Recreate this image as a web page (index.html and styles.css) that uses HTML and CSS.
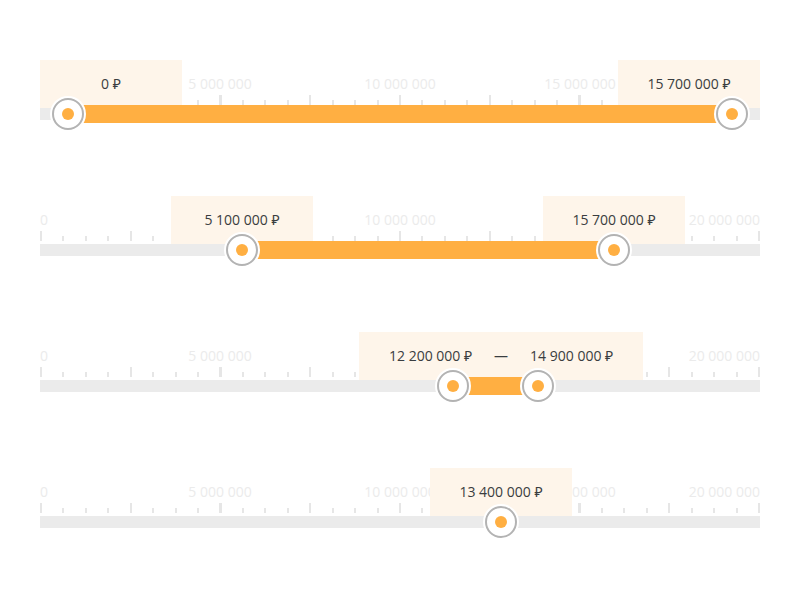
FILE: index.html
```html
<!DOCTYPE html>
<html lang="ru">
<head>
  <meta charset="UTF-8">
  <title>Price range sliders</title>
  <link rel="stylesheet" href="styles.css">
</head>
<body>
  <div class="page">

    <div class="slider">
      <div class="scale">
        <span>0</span><span>5 000 000</span><span>10 000 000</span><span>15 000 000</span><span>20 000 000</span>
      </div>
      <div class="ticks"></div>
      <div class="track">
        <div class="bubble" style="left: 0">0 ₽</div>
        <div class="bubble" style="left: 578px">15 700 000 ₽</div>
        <div class="fill" style="left: 27.5px; width: 664.5px"></div>
        <div class="handle" style="left: 27.5px"></div>
        <div class="handle" style="left: 692px"></div>
      </div>
    </div>

    <div class="slider">
      <div class="scale">
        <span>0</span><span>5 000 000</span><span>10 000 000</span><span>15 000 000</span><span>20 000 000</span>
      </div>
      <div class="ticks"></div>
      <div class="track">
        <div class="bubble" style="left: 131px">5 100 000 ₽</div>
        <div class="bubble" style="left: 503px">15 700 000 ₽</div>
        <div class="fill" style="left: 201.5px; width: 372.5px"></div>
        <div class="handle" style="left: 201.5px"></div>
        <div class="handle" style="left: 574px"></div>
      </div>
    </div>

    <div class="slider">
      <div class="scale">
        <span>0</span><span>5 000 000</span><span>10 000 000</span><span>15 000 000</span><span>20 000 000</span>
      </div>
      <div class="ticks"></div>
      <div class="track">
        <div class="bubble bubble-range" style="left: 319px">
          <span>12 200 000 ₽</span><span class="dash">—</span><span>14 900 000 ₽</span>
        </div>
        <div class="fill" style="left: 413px; width: 85px"></div>
        <div class="handle" style="left: 413px"></div>
        <div class="handle" style="left: 498px"></div>
      </div>
    </div>

    <div class="slider">
      <div class="scale">
        <span>0</span><span>5 000 000</span><span>10 000 000</span><span>15 000 000</span><span>20 000 000</span>
      </div>
      <div class="ticks"></div>
      <div class="track">
        <div class="bubble" style="left: 390px">13 400 000 ₽</div>
        <div class="handle" style="left: 461px"></div>
      </div>
    </div>

  </div>
</body>
</html>
```
FILE: styles.css
```css
html, body {
  margin: 0;
  padding: 0;
  background: #fff;
  font-family: 'Open Sans', 'Noto Sans', sans-serif;
  font-size: 14px;
}
.page {
  padding: 60px 40px 0;
}
.slider {
  margin-bottom: 76px;
}
.scale {
  display: grid;
  grid-template-columns: 1fr 2fr 2fr 2fr 1fr;
  padding-top: 14px;
  line-height: 20px;
  color: #ebebeb;
  white-space: nowrap;
}
.scale span {
  justify-self: center;
}
.scale span:first-child {
  justify-self: start;
}
.scale span:last-child {
  justify-self: end;
}
.ticks {
  height: 10px;
  margin-top: 1px;
  background:
    repeating-linear-gradient(to right, #e6e6e6 0 2px, transparent 2px 89.75px) top left / 100% 10px no-repeat,
    repeating-linear-gradient(to right, #e6e6e6 0 2px, transparent 2px 22.4375px) bottom left / 100% 5px no-repeat;
}
.track {
  position: relative;
  height: 12px;
  margin-top: 3px;
  background: #ebebeb;
}
.fill {
  position: absolute;
  top: -3px;
  height: 18px;
  background: #ffaf42;
}
.bubble {
  position: absolute;
  bottom: 100%;
  width: 142px;
  height: 48px;
  line-height: 48px;
  text-align: center;
  background: #fef5ea;
  color: #3a3d40;
  white-space: nowrap;
}
.bubble-range {
  width: auto;
  display: flex;
  gap: 22px;
  padding: 0 30px;
}
.handle {
  position: absolute;
  top: 50%;
  width: 32px;
  height: 32px;
  box-sizing: border-box;
  border: 2px solid #b3b3b3;
  border-radius: 50%;
  background: #fff;
  box-shadow: 0 0 0 2px #fff;
  transform: translate(-50%, -50%);
}
.handle::after {
  content: "";
  position: absolute;
  top: 50%;
  left: 50%;
  width: 12px;
  height: 12px;
  margin: -6px 0 0 -6px;
  border-radius: 50%;
  background: #ffaf42;
}
```
